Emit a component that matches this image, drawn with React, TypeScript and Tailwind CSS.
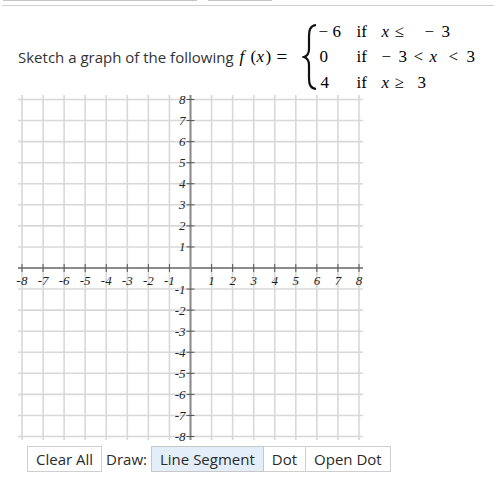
import React from 'react'

const U = 21.0625
const OX = 190.5
const OY = 176
const ticks = [-8, -7, -6, -5, -4, -3, -2, -1, 0, 1, 2, 3, 4, 5, 6, 7, 8]
const serif = "'Liberation Serif', 'Times New Roman', serif"

function Grid() {
  return (
    <svg width={380} height={352} className="block">
      {ticks.map((i) => (
        <line key={'v' + i} x1={OX + i * U} x2={OX + i * U} y1={3} y2={348} stroke="#d8d8d8" strokeWidth={1.6} />
      ))}
      {ticks.map((i) => (
        <line key={'h' + i} x1={18} x2={363} y1={OY - i * U} y2={OY - i * U} stroke="#d8d8d8" strokeWidth={1.6} />
      ))}
      <line x1={18} x2={363} y1={OY} y2={OY} stroke="#8c8c8c" strokeWidth={2} />
      <line x1={OX} x2={OX} y1={3} y2={348} stroke="#8c8c8c" strokeWidth={2} />
      {ticks.filter((i) => i !== 0).map((i) => (
        <g key={'t' + i}>
          <line x1={OX + i * U} x2={OX + i * U} y1={OY - 4} y2={OY + 4} stroke="#555" strokeWidth={1} />
          <line x1={OX - 4} x2={OX + 4} y1={OY - i * U} y2={OY - i * U} stroke="#555" strokeWidth={1} />
        </g>
      ))}
      <g style={{ fontFamily: serif, fontStyle: 'italic', fontSize: 13 }} fill="#222">
        {ticks.filter((i) => i !== 0).map((i) => (
          <text key={'xl' + i} x={OX + i * U} y={OY + 17} textAnchor="middle">{i}</text>
        ))}
        {ticks.filter((i) => i !== 0).map((i) => (
          <text key={'yl' + i} x={OX - 5} y={OY - i * U + 4.5} textAnchor="end">{i}</text>
        ))}
      </g>
    </svg>
  )
}

function Brace() {
  return (
    <svg width={16} height={66} viewBox="0 0 16 66" className="block">
      <path
        d="M14 1 C8 2 7 6 7 12 L7 25 C7 30 5 32 2 33 C5 34 7 36 7 41 L7 54 C7 60 8 64 14 65"
        fill="none"
        stroke="#111"
        strokeWidth={2.2}
      />
    </svg>
  )
}

export default function App() {
  return (
    <div className="w-[496px] h-[480px] bg-white text-[#333] font-['Open_Sans',sans-serif]">
      <div className="flex h-[1px]">
        <div className="ml-[3px] w-[194px] bg-[#c4c4c4]" />
        <div className="ml-[11px] w-[64px] bg-[#c4c4c4]" />
      </div>
      <div className="mx-[2px] mt-[4px] h-[1px] bg-[#cfcfcf]" />
      <div className="mt-[16px] flex h-[70px] items-center pl-[18px]">
        <span className="mr-[6px] text-[15px] text-[#333]">Sketch a graph of the following</span>
        <div className="flex items-center font-['Liberation_Serif',serif] text-[17px] text-black">
          <span className="w-[11px] italic">f</span>
          <span className="w-[6px]">(</span>
          <span className="w-[9px] italic">x</span>
          <span className="w-[11px]">)</span>
          <span className="w-[25px] text-[19px]">=</span>
          <Brace />
          <div className="ml-[1px] grid grid-cols-[38px_25px_auto] leading-[25.5px]">
            <span className="flex"><span className="w-[14px]">−</span>6</span>
            <span>if</span>
            <span className="flex"><i className="w-[13px]">x</i><span className="w-[30px]">≤</span><span className="w-[17px]">−</span>3</span>
            <span className="pl-[1px]">0</span>
            <span>if</span>
            <span className="flex"><span className="w-[17px]">−</span><span className="w-[15px]">3</span><span className="w-[16px]">&lt;</span><i className="w-[19px]">x</i><span className="w-[18px]">&lt;</span>3</span>
            <span className="pl-[2px]">4</span>
            <span>if</span>
            <span className="flex"><i className="w-[13px]">x</i><span className="w-[23px]">≥</span>3</span>
          </div>
        </div>
      </div>
      <Grid />
      <div className="mt-[2px] flex h-[26px] items-stretch pl-[27px] text-[15px] text-[#2b2b2b]">
        <button className="border border-[#cfcfcf] bg-white px-[8px]">Clear All</button>
        <span className="mx-[4px] flex items-center">Draw:</span>
        <div className="flex">
          <button className="border border-[#c8c8c8] bg-[#e4eef8] px-[8px]">Line Segment</button>
          <button className="border border-l-0 border-[#cfcfcf] bg-white px-[8px]">Dot</button>
          <button className="border border-l-0 border-[#cfcfcf] bg-white px-[8px]">Open Dot</button>
        </div>
      </div>
    </div>
  )
}
